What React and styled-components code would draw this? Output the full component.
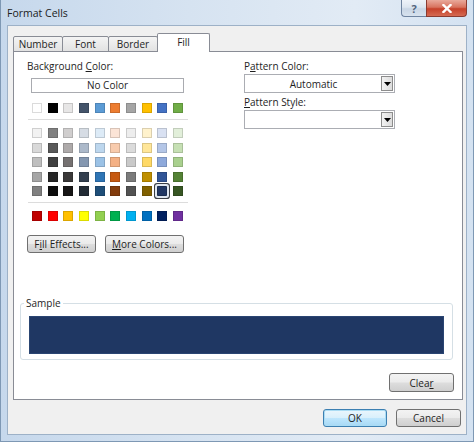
import React from "react";
import styled, { createGlobalStyle, css } from "styled-components";

const Global = createGlobalStyle`
  html, body { margin: 0; padding: 0; }
  body {
    width: 474px; height: 442px; overflow: hidden;
    font-family: "Open Sans", "Noto Sans", sans-serif;
    font-size: 10px; color: #1e1e1e;
    background: #ffffff;
  }
  * { box-sizing: border-box; }
`;

const Frame = styled.div`
  width: 474px;
  height: 442px;
  display: flex;
  flex-direction: column;
  background: linear-gradient(90deg, #c6d8ec 0%, #d6e3f1 40%, #e2ebf5 75%, #d4e2f1 100%);
  border: 1px solid #7e98b4;
  border-top: none;
`;

const TitleBar = styled.div`
  height: 25px;
  flex: none;
  display: flex;
  align-items: flex-start;
  justify-content: space-between;
  padding-left: 6px;
  padding-right: 6px;
`;

const Title = styled.div`
  padding-top: 6px;
  font-size: 10.5px;
  color: #1b1b1b;
`;

const CaptionButtons = styled.div`
  display: flex;
  height: 17px;
`;

const CaptionButton = styled.div`
  height: 17px;
  display: flex;
  align-items: center;
  justify-content: center;
  border: 1px solid #6f84a0;
  border-top: none;
  ${(p) =>
    p.$close
      ? css`
          width: 41px;
          border-radius: 0 0 4px 0;
          background: linear-gradient(#e9a99b 0%, #d8735f 45%, #c6412a 55%, #d56a52 100%);
          border-color: #8a3b30;
        `
      : css`
          width: 25px;
          border-right: none;
          border-radius: 0 0 0 4px;
          background: linear-gradient(#eef3f9 0%, #dde6f0 45%, #c9d6e5 55%, #d7e2ee 100%);
          color: #53657c;
          font-weight: 700;
          font-size: 11px;
        `}
`;

const Body = styled.div`
  flex: 1;
  margin: 0 6px 6px 6px;
  background: #f0f0f0;
  border: 1px solid #9db1c7;
  display: flex;
  flex-direction: column;
  padding: 7px 3px 7px 5px;
`;

const TabStrip = styled.div`
  display: flex;
  align-items: flex-end;
  height: 19px;
  margin-bottom: -1px;
  position: relative;
  z-index: 1;
`;

const Tab = styled.div`
  display: flex;
  align-items: center;
  justify-content: center;
  width: ${(p) => p.$w}px;
  margin-left: ${(p) => (p.$first ? 0 : -1)}px;
  border: 1px solid #898c95;
  border-radius: 2px 2px 0 0;
  ${(p) =>
    p.$active
      ? css`
          height: 19px;
          border-bottom: none;
          background: #ffffff;
          padding-bottom: 3px;
        `
      : css`
          height: 16px;
          background: linear-gradient(#f4f4f4, #e2e2e2);
        `}
`;

const Panel = styled.div`
  flex: 1;
  background: #ffffff;
  border: 1px solid #898c95;
  display: flex;
  flex-direction: column;
`;

const TopRow = styled.div`
  display: flex;
  padding-left: 13px;
`;

const LeftCol = styled.div`
  width: 217px;
  display: flex;
  flex-direction: column;
  padding-top: 8px;
`;

const RightCol = styled.div`
  width: 151px;
  display: flex;
  flex-direction: column;
  padding-top: 8px;
`;

const Label = styled.div`
  line-height: 13px;
  height: 13px;
  white-space: nowrap;
  margin-top: ${(p) => p.$mt || 0}px;
`;

const NoColor = styled.div`
  margin: 5px 0 0 4px;
  width: 153px;
  height: 15px;
  border: 1px solid #a9abb0;
  display: flex;
  align-items: center;
  justify-content: center;
  line-height: 13px;
`;

const SwatchRow = styled.div`
  margin: ${(p) => p.$mt}px 0 0 5px;
  width: 151px;
  display: flex;
  justify-content: space-between;
`;

const SwatchGrid = styled.div`
  margin: 8px 0 0 5px;
  width: 151px;
  display: grid;
  grid-template-columns: repeat(10, 10px);
  justify-content: space-between;
  row-gap: 4.6px;
`;

const Swatch = styled.div`
  width: 10px;
  height: 10px;
  background: ${(p) => p.$c};
  box-shadow: inset 0 0 0 1px rgba(0, 0, 0, 0.14);
  ${(p) =>
    p.$selected &&
    css`
      box-shadow: inset 0 0 0 1px rgba(0, 0, 0, 0.2), 0 0 0 2px #dfe7f1, 0 0 0 3px #3b3f46;
      border-radius: 1px;
    `}
`;

const Separator = styled.div`
  margin: ${(p) => p.$mt}px 0 0 1px;
  width: 160px;
  height: 1px;
  background: #dcdcdc;
`;

const ButtonRow = styled.div`
  display: flex;
  gap: ${(p) => p.$gap || 9}px;
  margin-top: ${(p) => p.$mt || 0}px;
  justify-content: ${(p) => p.$justify || "flex-start"};
  padding-right: ${(p) => p.$pr || 0}px;
`;

const Button = styled.div`
  width: ${(p) => p.$w}px;
  height: ${(p) => p.$h || 18}px;
  display: flex;
  align-items: center;
  justify-content: center;
  border: 1px solid #707070;
  border-radius: 3px;
  background: linear-gradient(#f3f3f3 0%, #ebebeb 48%, #dddddd 52%, #cfcfcf 100%);
  white-space: nowrap;
  ${(p) =>
    p.$default &&
    css`
      border-color: #3c7fb1;
      box-shadow: inset 0 0 0 1px #aadcf4;
      background: linear-gradient(#eaf6fd 0%, #d9f0fc 48%, #bee6fd 52%, #a7d9f5 100%);
    `}
`;

const Combo = styled.div`
  margin-top: 1px;
  height: 19px;
  width: 151px;
  border: 1px solid #abadb3;
  background: #ffffff;
  display: flex;
  align-items: stretch;
  padding: 1px;
`;

const ComboText = styled.div`
  flex: 1;
  display: flex;
  align-items: center;
  justify-content: center;
`;

const DropButton = styled.div`
  width: 12px;
  border: 1px solid #8d8d8d;
  background: linear-gradient(90deg, #f2f2f2, #dcdcdc);
  display: flex;
  align-items: center;
  justify-content: center;
`;

const SampleSet = styled.fieldset`
  margin: auto 0 0 6px;
  width: 433px;
  border: 1px solid #d5dfe5;
  border-radius: 3px;
  padding: 0 8px 5px 8px;
  min-width: 0;
`;

const SampleLegend = styled.legend`
  padding: 0 2px;
  margin-left: -5px;
  line-height: 13px;
  font-size: 10px;
`;

const SampleFill = styled.div`
  margin-top: 6.5px;
  height: 38px;
  background: #1f3763;
  border: 1px solid #2a4572;
`;

const ClearRow = styled.div`
  display: flex;
  justify-content: flex-end;
  padding: 13px 8px 7px 0;
`;

const U = styled.span`
  text-decoration: underline;
  text-underline-offset: 1px;
`;

const theme = [
  ["#FFFFFF", "#F2F2F2", "#D9D9D9", "#BFBFBF", "#A6A6A6", "#808080"],
  ["#000000", "#808080", "#595959", "#404040", "#262626", "#0D0D0D"],
  ["#E7E6E6", "#D0CECE", "#AEAAAA", "#757171", "#3A3838", "#171616"],
  ["#44546A", "#D6DCE4", "#ACB9CA", "#8497B0", "#333F4F", "#222B35"],
  ["#5B9BD5", "#DDEBF7", "#BDD7EE", "#9BC2E6", "#2F75B5", "#1F4E78"],
  ["#ED7D31", "#FCE4D6", "#F8CBAD", "#F4B084", "#C65911", "#833C0C"],
  ["#A5A5A5", "#EDEDED", "#DBDBDB", "#C9C9C9", "#7B7B7B", "#525252"],
  ["#FFC000", "#FFF2CC", "#FFE699", "#FFD966", "#BF8F00", "#806000"],
  ["#4472C4", "#D9E1F2", "#B4C6E7", "#8EA9DB", "#305496", "#203764"],
  ["#70AD47", "#E2EFDA", "#C6E0B4", "#A9D08E", "#548235", "#375623"],
];

const standard = ["#C00000", "#FF0000", "#FFC000", "#FFFF00", "#92D050", "#00B050", "#00B0F0", "#0070C0", "#002060", "#7030A0"];

const Arrow = () => (
  <svg width="7" height="4" viewBox="0 0 7 4">
    <polygon points="0,0 7,0 3.5,4" fill="#000" />
  </svg>
);

const CloseGlyph = () => (
  <svg width="10" height="9" viewBox="0 0 10 9">
    <path d="M1.5 1 L8.5 8 M8.5 1 L1.5 8" stroke="#fff" strokeWidth="2.4" strokeLinecap="square" />
  </svg>
);

export default function App() {
  const tintCells = [];
  for (let r = 1; r <= 5; r++) {
    for (let c = 0; c < 10; c++) {
      tintCells.push(
        <Swatch key={`${r}-${c}`} $c={theme[c][r]} $selected={r === 5 && c === 8} />
      );
    }
  }
  return (
    <>
      <Global />
      <Frame>
        <TitleBar>
          <Title>Format Cells</Title>
          <CaptionButtons>
            <CaptionButton>?</CaptionButton>
            <CaptionButton $close>
              <CloseGlyph />
            </CaptionButton>
          </CaptionButtons>
        </TitleBar>
        <Body>
          <TabStrip>
            <Tab $w={50} $first>Number</Tab>
            <Tab $w={47}>Font</Tab>
            <Tab $w={50}>Border</Tab>
            <Tab $w={53} $active>Fill</Tab>
          </TabStrip>
          <Panel>
            <TopRow>
              <LeftCol>
                <Label>Background <U>C</U>olor:</Label>
                <NoColor>No Color</NoColor>
                <SwatchRow $mt={10}>
                  {theme.map((col) => (
                    <Swatch key={col[0]} $c={col[0]} />
                  ))}
                </SwatchRow>
                <Separator $mt={6} />
                <SwatchGrid>{tintCells}</SwatchGrid>
                <Separator $mt={6} />
                <SwatchRow $mt={8}>
                  {standard.map((c) => (
                    <Swatch key={c + "s"} $c={c} />
                  ))}
                </SwatchRow>
                <ButtonRow $mt={14} $gap={9}>
                  <Button $w={69}>F<U>i</U>ll Effects...</Button>
                  <Button $w={79}><U>M</U>ore Colors...</Button>
                </ButtonRow>
              </LeftCol>
              <RightCol>
                <Label>P<U>a</U>ttern Color:</Label>
                <Combo>
                  <ComboText>Automatic</ComboText>
                  <DropButton><Arrow /></DropButton>
                </Combo>
                <Label $mt={3}><U>P</U>attern Style:</Label>
                <Combo>
                  <ComboText />
                  <DropButton><Arrow /></DropButton>
                </Combo>
              </RightCol>
            </TopRow>
            <SampleSet>
              <SampleLegend>Sample</SampleLegend>
              <SampleFill />
            </SampleSet>
            <ClearRow>
              <Button $w={65} $h={19}>Clea<U>r</U></Button>
            </ClearRow>
          </Panel>
          <ButtonRow $mt={9} $gap={9} $justify="flex-end" $pr={2}>
            <Button $w={64} $default>OK</Button>
            <Button $w={65}>Cancel</Button>
          </ButtonRow>
        </Body>
      </Frame>
    </>
  );
}
